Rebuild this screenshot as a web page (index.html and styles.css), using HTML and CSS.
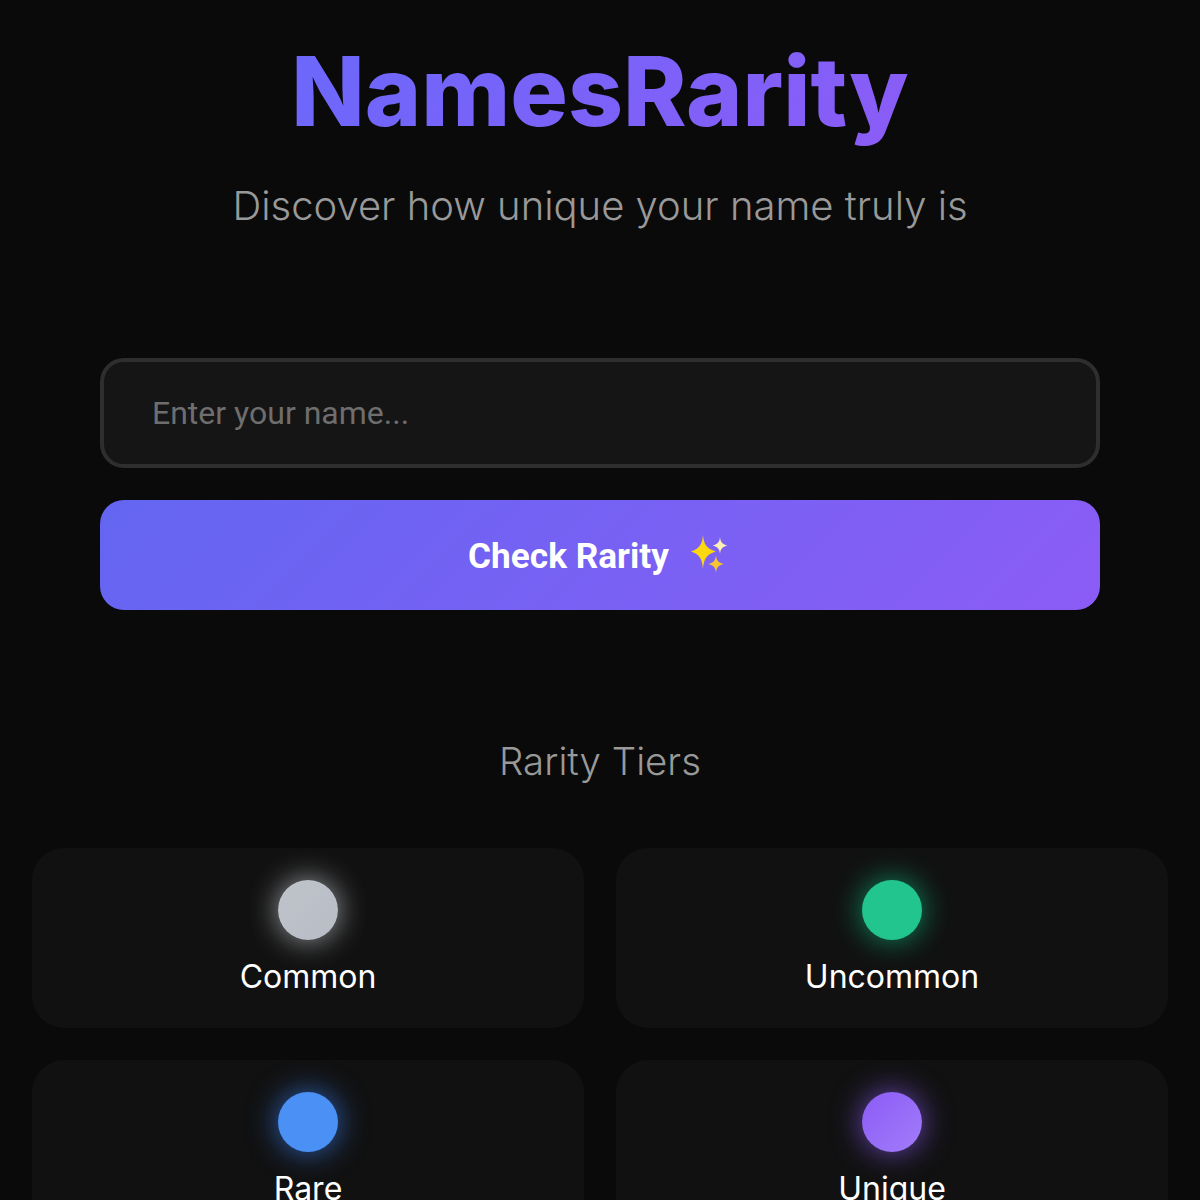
FILE: index.html
```html
<!DOCTYPE html>
<html lang="en">
<head>
<meta charset="utf-8">
<title>NamesRarity</title>
<link rel="stylesheet" href="styles.css">
</head>
<body>
<main class="page">
  <header class="hero">
    <h1 class="title">NamesRarity</h1>
    <p class="subtitle">Discover how unique your name truly is</p>
  </header>
  <form class="form">
    <input class="name-input" type="text" placeholder="Enter your name...">
    <button class="check-btn" type="button">
      <span class="check-label">Check Rarity</span>
      <svg class="sparkles" viewBox="0 0 40 40" width="40" height="40" aria-hidden="true">
        <path fill="#fdd70f" d="M13 0 C14 9 16 13.5 26 16.5 C16 19.5 14 24 13 34 C12 24 10 19.5 1 16.5 C10 13.5 12 9 13 0Z"/>
        <path fill="#fdeeb5" d="M30 2 C30.5 7 32 9 37.5 10.5 C32 12 30.5 14 30 19 C29.5 14 28 12 22.5 10.5 C28 9 29.5 7 30 2Z"/>
        <path fill="#f6c62e" d="M26 20 C26.5 25.5 28 27.5 34 29 C28 30.5 26.5 32.5 26 38 C25.5 32.5 24 30.5 18 29 C24 27.5 25.5 25.5 26 20Z"/>
      </svg>
    </button>
  </form>
  <section class="tiers">
    <h2 class="tiers-title">Rarity Tiers</h2>
    <div class="tier-grid">
      <div class="tier"><div class="dot dot-common"></div><div class="tier-name">Common</div></div>
      <div class="tier"><div class="dot dot-uncommon"></div><div class="tier-name">Uncommon</div></div>
      <div class="tier"><div class="dot dot-rare"></div><div class="tier-name">Rare</div></div>
      <div class="tier"><div class="dot dot-unique"></div><div class="tier-name">Unique</div></div>
    </div>
  </section>
</main>
</body>
</html>
```
FILE: styles.css
```css
* { box-sizing: border-box; }
html, body { margin: 0; height: 1200px; overflow: hidden; background: #0a0a0a; }
body { font-family: "Inter", "Liberation Sans", sans-serif; color: #fff; }
.page { display: flex; flex-direction: column; padding: 33px 32px 0; }
.hero { text-align: center; }
.title {
  margin: 0 auto;
  width: max-content;
  font-size: 96px;
  line-height: 116px;
  font-weight: 800;
  background: linear-gradient(135deg, #6b68fb, #8b5cf6);
  -webkit-background-clip: text;
  background-clip: text;
  color: transparent;
}
.subtitle {
  margin: 33px 0 0;
  font-size: 40px;
  line-height: 48px;
  font-weight: 300;
  color: #999;
}
.form { display: flex; flex-direction: column; gap: 32px; width: 1000px; margin: 128px auto 0; }
.name-input {
  height: 110px;
  padding: 0 48px;
  background: #151515;
  border: 4px solid #2e2e2e;
  border-radius: 24px;
  font-family: "Roboto", sans-serif;
  font-size: 32px;
  color: #fff;
  outline: none;
}
.name-input::placeholder { color: #6e6e6e; opacity: 1; }
.check-btn {
  height: 110px;
  display: flex;
  align-items: center;
  justify-content: center;
  gap: 21px;
  border: 0;
  border-radius: 24px;
  background: linear-gradient(135deg, #6366f1, #8b5cf6);
  font-family: "Roboto", sans-serif;
  font-size: 35.2px;
  font-weight: 700;
  color: #fff;
}
.check-label { padding-top: 2px; }
.sparkles { display: block; overflow: visible; margin-right: 2px; }
.tiers { margin-top: 128px; }
.tiers-title {
  margin: 0 0 64px;
  text-align: center;
  font-size: 38.4px;
  line-height: 46px;
  font-weight: 300;
  color: #999;
}
.tier-grid { display: grid; grid-template-columns: 1fr 1fr; gap: 32px; }
.tier {
  height: 180px;
  padding-top: 32px;
  display: flex;
  flex-direction: column;
  align-items: center;
  gap: 16px;
  background: #111;
  border-radius: 32px;
}
.dot { width: 60px; height: 60px; border-radius: 50%; }
.dot-common { background: linear-gradient(135deg, #bfc3ca, #b8bdc6); box-shadow: 0 0 30px rgba(209,213,219,.75); }
.dot-uncommon { background: #22c58e; box-shadow: 0 0 30px rgba(16,185,129,.75); }
.dot-rare { background: #4a90f5; box-shadow: 0 0 30px rgba(59,130,246,.75); }
.dot-unique { background: linear-gradient(135deg, #8b5cf6, #a27cf9); box-shadow: 0 0 30px rgba(139,92,246,.75); }
.tier-name { font-size: 32px; line-height: 42px; font-weight: 400; color: #fff; }
```
